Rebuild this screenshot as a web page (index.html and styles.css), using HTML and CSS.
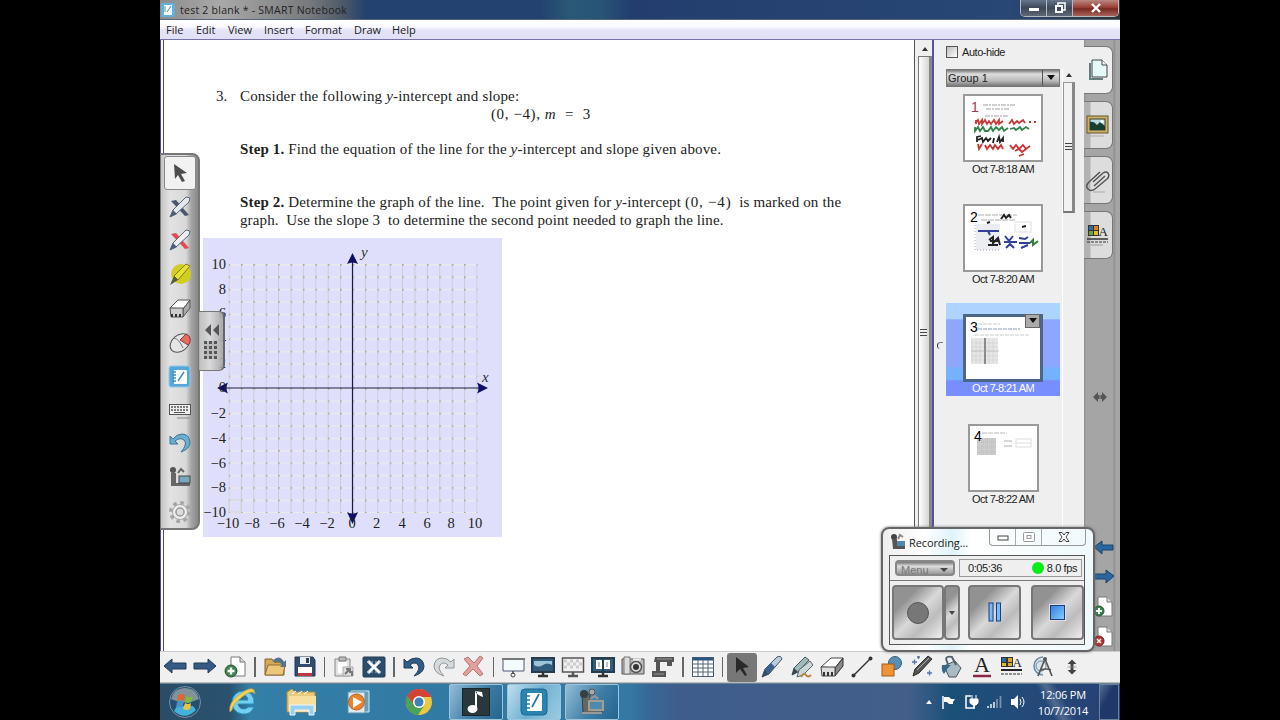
FILE: index.html
```html
<!DOCTYPE html>
<html lang="en">
<head>
    <meta charset="UTF-8">
    <meta name="viewport" content="width=device-width, initial-scale=1.0">
    <title>test 2 blank * - SMART Notebook</title>
    <link rel="stylesheet" href="styles.css">
</head>
<body>
    <div class="screen">
        <header class="titlebar">
            <svg class="app-icon" width="14" height="14" viewBox="0 0 14 14"><rect width="14" height="14" rx="1" fill="#63b1d8"/><rect x="3" y="2" width="8" height="10" fill="#fff"/><path d="M6 9l4-6M3 4h2M3 6h2M3 8h2" stroke="#4a8fb5"/></svg>
            <span class="title">test 2 blank * - SMART Notebook</span>
            <div class="window-buttons">
                <span class="wb min"><svg width="12" height="10"><rect x="1" y="5" width="10" height="3" fill="#fff"/></svg></span>
                <span class="wb max"><svg width="12" height="12"><path d="M4 3V1h7v7H9" fill="none" stroke="#fff" stroke-width="1.5"/><rect x="2" y="4" width="6" height="6" fill="none" stroke="#fff" stroke-width="2"/></svg></span>
                <span class="wb close"><svg width="12" height="10"><path d="M2 1l8 8M10 1L2 9" stroke="#fff" stroke-width="2.4"/></svg></span>
            </div>
        </header>

        <nav class="menubar">
            <span class="m-file">File</span>
            <span class="m-edit">Edit</span>
            <span class="m-view">View</span>
            <span class="m-insert">Insert</span>
            <span class="m-format">Format</span>
            <span class="m-draw">Draw</span>
            <span>Help</span>
        </nav>

        <main class="workspace">
            <section class="page">
                <div class="problem">
                    <span class="number">3.</span>
                    <div class="question">
                        <p class="l1">Consider the following <i>y</i>-intercept and slope:</p>
                        <p class="formula">(0, −4), <i>m</i> &nbsp;= &nbsp;3</p>
                        <p class="step step1"><b>Step 1.</b> Find the equation of the line for the <i>y</i>-intercept and slope given above.</p>
                        <p class="step2a"><b>Step 2.</b> Determine the graph of the line.&nbsp; The point given for <i>y</i>-intercept <span class="math">(0, −4)</span>&nbsp; is marked on the</p>
                        <p class="step2b">graph.&nbsp; Use the slope 3&nbsp; to determine the second point needed to graph the line.</p>
                    </div>
                </div>
                <svg class="graph" width="299" height="299" viewBox="203 238 299 299">
                    <defs>
                        <pattern id="grid" x="228.5" y="264" width="12.4" height="12.4" patternUnits="userSpaceOnUse">
                            <path d="M0 .5h12.4" stroke="#e9e9ee" stroke-width="2"/>
                            <path d="M.5 0v12.4" stroke="#cbcbd6"/>
                            <rect width="1.6" height="1.6" fill="#a5a396"/>
                        </pattern>
                    </defs>
                    <rect x="203" y="238" width="299" height="299" fill="#dfdffc"/>
                    <rect x="228.5" y="264" width="249" height="249" fill="url(#grid)"/>
                    <rect x="229" y="500" width="12" height="12" fill="none" stroke="#d4d4d2"/>
                    <g stroke="#1c1a4c" stroke-width="1.2"><path d="M352.5 256v264M220 388h264"/></g>
                    <g fill="#100f66">
                        <path d="M352.5 253l5.500 11q-5.500-3-11 0z"/>
                        <path d="M352.500 524l5.500-12q-5.500 3-11 0z"/>
                        <path d="M488 388l-11-5.500q3 5.500 0 11z"/>
                        <path d="M217 388l11-5.500q-3 5.500 0 11z"/>
                    </g>
                    <g class="axis y-axis">
                        <text x="226" y="269">10</text><text x="226" y="294">8</text><text x="226" y="318">6</text>
                        <text x="226" y="343">4</text><text x="226" y="368">2</text><text x="226" y="392">0</text>
                        <text x="226" y="418">−2</text><text x="226" y="443">−4</text><text x="226" y="468">−6</text>
                        <text x="226" y="492">−8</text><text x="226" y="517">−10</text>
                    </g>
                    <g class="axis x-axis">
                        <text x="228" y="528">−10</text><text x="252" y="528">−8</text><text x="277" y="528">−6</text>
                        <text x="302" y="528">−4</text><text x="327" y="528">−2</text><text x="352" y="528">0</text>
                        <text x="376.500" y="528">2</text><text x="402" y="528">4</text><text x="427" y="528">6</text>
                        <text x="451" y="528">8</text><text x="475" y="528">10</text>
                    </g>
                    <text class="var" x="361" y="257">y</text>
                    <text class="var" x="482" y="382">x</text>
                </svg>
            </section>

            <div class="page-scroll">
                <i class="up"></i>
                <div class="thumb"><b class="grip"></b></div>
            </div>

            <aside class="sorter">
                <label class="autohide"><i class="box"></i>Auto-hide</label>
                <div class="group"><span>Group 1</span><i class="drop"></i></div>
                <div class="slides">
                    <figure class="slide">
                        <svg width="78" height="66" viewBox="0 0 78 66">
                            <path d="M19 10h32M22 14h24M21 21h24" stroke="#888" stroke-dasharray="5 1 2 1" stroke-width=".8"/>
                            <g fill="none" stroke-width="1.800">
                                <path d="M12 25v4M11 28l3-3 1 4 3-4v4l3-4 2 4 2-3 2 3 3-4 2 4 3-4v4l4-3M45 29l3-4 2 4 3-3 2 2 4-3 2 3M65 27h2M70 27h2" stroke="#c83a3a"/>
                                <path d="M11 32v4l3-4 2 4 3-4 2 4h3l3-4 2 4 3-4 3 3 3-3 2 4 4-3M46 34l4-1 2 2 4-3 2 3 4-3 3 2" stroke="#32824a"/>
                                <path d="M17 41l-4 1v5M14 45l4-2 1 4 3-4 2 3 3-3M33 47l2-5 1 5 3-4v4M30 43l-1 5" stroke="#222"/>
                                <path d="M14 49l1 5 3-5M21 50l2 4 3-4 3 4 2-4 3 4 3-4 2 4M46 50l3 4 3-4 3 4 4-4 3 4 4-3M51 56l4-2 3 3 4-3M55 61l5-2" stroke="#c33"/>
                            </g>
                            <text x="7" y="17" fill="#a83550">1</text>
                        </svg>
                        <figcaption>Oct 7-8:18 AM</figcaption>
                    </figure>
                    <figure class="slide">
                        <svg width="78" height="66" viewBox="0 0 78 66">
                            <rect x="12" y="19" width="24" height="26" fill="#ececf3"/>
                            <path d="M14 10h39M17 15h34" stroke="#999" stroke-dasharray="6 1" stroke-width=".8"/>
                            <rect x="51" y="17" width="16" height="10" fill="none" stroke="#ddd"/>
                            <g fill="none" stroke-width="2">
                                <path d="M37 14l3-4 2 3 3-3 2 3M58 22l4-1M25 35l4-3v6l5-5 2 7M24 40h10M26 36h9M23 18l3-1" stroke="#222"/>
                                <path d="M14 26h21M24 26l2 4M41 31l4 5 4-5M40 37h13M42 43l4-4 4 4M55 33l6 1 3-2M55 38h11M57 43l7-3" stroke="#333f98"/>
                                <path d="M66 38l3-3v5l5-4" stroke="#2d813d"/>
                            </g>
                            <path d="M11 20v26M13 45h24" stroke="#aaa" stroke-dasharray="1 2"/>
                            <text x="6" y="17">2</text>
                        </svg>
                        <figcaption>Oct 7-8:20 AM</figcaption>
                    </figure>
                    <figure class="slide selected">
                        <svg width="78" height="66" viewBox="0 0 78 66">
                            <path d="M14 9h22M11 20h55" stroke="#ccc" stroke-dasharray="4 1"/>
                            <path d="M14 14h42" stroke="#6d86a7" stroke-dasharray="4 1" stroke-width=".8"/>
                            <rect x="7" y="23" width="27" height="26" fill="#e6e6e6"/>
                            <path d="M8 24v24M12 24v24M16 24v24M25 24v24M29 24v24M7 28h27M7 32h27M7 41h27M7 45h27" stroke="#d2d2d2" stroke-width=".6"/>
                            <path d="M21 23v26" stroke="#333"/><path d="M7 36h28" stroke="#999" stroke-width=".5"/>
                            <text x="6" y="17">3</text>
                        </svg>
                        <i class="slide-menu"></i>
                        <figcaption>Oct 7-8:21 AM</figcaption>
                    </figure>
                    <figure class="slide small">
                        <svg width="69" height="66" viewBox="0 0 69 66">
                            <path d="M13 8h25" stroke="#bbb" stroke-dasharray="5 1"/>
                            <rect x="8" y="13" width="19" height="17" fill="#ccc"/>
                            <path d="M8 17h19M8 22h19M8 27h19M13 13v17M18 13v17M23 13v17" stroke="#bbb" stroke-dasharray="1 1"/>
                            <path d="M35 16h8M35 21h8" stroke="#999" stroke-width=".8"/>
                            <rect x="47" y="14" width="15" height="8" fill="none" stroke="#ddd"/><path d="M47 18h15" stroke="#ddd"/>
                            <text x="5" y="16">4</text>
                        </svg>
                        <figcaption>Oct 7-8:22 AM</figcaption>
                    </figure>
                    <div class="slide-scroll"><i class="up"></i><div class="thumb"><b class="grip"></b></div></div>
                </div>
            </aside>

            <div class="tabs">
                <span class="tab active"><svg width="22" height="24" viewBox="0 0 22 24"><path d="M3 5v16h13" fill="none" stroke="#667d80" stroke-width="2"/><path d="M5 2h10l5 5v12H5z" fill="#e5f8fa" stroke="#444"/><path d="M15 2v5h5" fill="#fff" stroke="#444"/></svg></span>
                <span class="tab"><svg width="24" height="24" viewBox="0 0 24 24"><rect x="1" y="3" width="21" height="17" fill="#cbb26b" stroke="#67542b"/><rect x="4" y="6" width="15" height="11" fill="#b6dbe3" stroke="#493e28"/><path d="M4 9q4-1 7 3l3-3 5 4v4H4z" fill="#173f30"/><circle cx="16" cy="8.500" r="1.500" fill="#fff"/><path d="M4 23h14" stroke="#aaa"/></svg></span>
                <span class="tab"><svg width="24" height="25" viewBox="0 0 24 25"><path d="M7 14L17 5q3-2 5 0 2 3-1 6L9 21q-4 3-7 0t1-7L14 4M8 18l11-10" fill="none" stroke="#555" stroke-width="1.500"/><path d="M7 24h12" stroke="#aaa"/></svg></span>
                <span class="tab"><svg width="24" height="24" viewBox="0 0 24 24"><rect x="2" y="2" width="11" height="11" fill="#333"/><path d="M3 3h4v4H3z" fill="#2c6d9c"/><path d="M8 3h4v4H8z" fill="#e18125"/><path d="M3 8h4v4H3z" fill="#69a23b"/><path d="M8 8h4v4H8z" fill="#e0bb38"/><text x="12.500" y="13" class="ico-a">A</text><path d="M1 16h21" stroke="#333" stroke-width="1.500"/><path d="M1 19h21" stroke="#333" stroke-dasharray="3 1"/><path d="M5 22h12" stroke="#999"/></svg></span>
                <svg class="resize" width="14" height="12" viewBox="0 0 14 12"><path d="M0 6l5-5v3h4V1l5 5-5 5V8H5v3z" fill="#555"/><path d="M7 0v12" stroke="#999"/></svg>
                <div class="strip-tools">
                    <svg width="20" height="20" viewBox="0 0 20 20"><path d="M0 10l8-6v4h11v5H8v4z" fill="#2b679e" stroke="#1a446d"/></svg>
                    <svg width="20" height="20" viewBox="0 0 20 20"><path d="M20 10l-8-6v4H1v5h11v4z" fill="#2b679e" stroke="#1a446d"/></svg>
                    <svg width="20" height="24" viewBox="0 0 20 24"><path d="M4 2h9l5 5v14H4z" fill="#fff" stroke="#777"/><path d="M13 2v5h5" fill="#ddd" stroke="#777"/><circle cx="5" cy="16" r="5" fill="#39834a" stroke="#245c30"/><path d="M5 13v6M2 16h6" stroke="#fff" stroke-width="2"/></svg>
                    <svg width="20" height="24" viewBox="0 0 20 24"><path d="M4 2h9l5 5v14H4z" fill="#fff" stroke="#777"/><path d="M13 2v5h5" fill="#ddd" stroke="#777"/><circle cx="5" cy="16" r="5" fill="#b53230" stroke="#762020"/><path d="M3 14l4 4M7 14l-4 4" stroke="#fff" stroke-width="1.500"/></svg>
                </div>
            </div>

            <!-- floating tools over the page -->
            <div class="floating-tools">
                <span class="ft on"><svg width="24" height="24" viewBox="0 0 24 24"><path d="M6 3l13 9-6 1 4 7-3 1-4-7-3 4z" fill="#4d4d4d"/></svg></span>
                <span class="ft"><svg width="24" height="24" viewBox="0 0 24 24"><path d="M3 6l5-1 13 15-4 1z" fill="#49566b"/><path d="M2 22l3-7L18 2l4 1-1 4L8 19z" fill="#e5e9ed" stroke="#596575"/><path d="M2 22l3-7 4 4z" fill="#4d607b"/></svg></span>
                <span class="ft"><svg width="24" height="24" viewBox="0 0 24 24"><path d="M3 6l5-1 13 15-4 1z" fill="#df4c55"/><path d="M2 22l3-7L18 2l4 1-1 4L8 19z" fill="#edf0f2" stroke="#596575"/><path d="M2 22l3-7 4 4z" fill="#4d607b"/></svg></span>
                <span class="ft"><svg width="24" height="24" viewBox="0 0 24 24"><circle cx="13" cy="12" r="10" fill="#d2cd21"/><path d="M6 14L18 2l4 2L10 18z" fill="#e6e22d" stroke="#817c1b"/><path d="M2 23l4-9 4 4z" fill="#555a39"/></svg></span>
                <span class="ft"><svg width="24" height="24" viewBox="0 0 24 24"><path d="M2 12L10 4h12l-7 9z" fill="#fff" stroke="#555"/><path d="M15 13l7-9v8l-7 9z" fill="#aaa" stroke="#555"/><path d="M2 12h13v9H3z" fill="#ccc" stroke="#555"/><path d="M4 18v3M8 18v3M12 18v3" stroke="#333" stroke-width="2"/></svg></span>
                <span class="ft"><svg width="24" height="24" viewBox="0 0 24 24"><ellipse cx="12" cy="13" rx="11" ry="8" transform="rotate(-40 12 13)" fill="#e5e5e5" stroke="#555"/><path d="M12 10l6-6q5 2 4 8l-2 3z" fill="#e76c61" stroke="#8d3d37"/><path d="M6 8q5 1 9 10" fill="none" stroke="#777"/></svg></span>
                <span class="ft"><svg width="24" height="24" viewBox="0 0 24 24"><rect x="1" y="2" width="21" height="21" rx="2" fill="#58a7da" stroke="#8cccea"/><rect x="6" y="6" width="13" height="14" rx="1" fill="#fff"/><path d="M10 17l6-9M4 8h4M4 11h4M4 14h4M4 17h4" stroke="#438ebd" stroke-width="1.500"/></svg></span>
                <span class="ft"><svg width="24" height="24" viewBox="0 0 24 24"><rect x="1.500" y="7.500" width="21" height="10" fill="#eee" stroke="#555"/><path d="M3 10h18M3 13h18" stroke="#555" stroke-width="1.500" stroke-dasharray="2 1"/><path d="M6 15.500h11" stroke="#555"/><path d="M9 21h13" stroke="#888"/></svg></span>
                <span class="ft"><svg width="24" height="24" viewBox="0 0 24 24"><path d="M2 5v8h8l-3-3q5-4 9-1 4 4-3 12 9-3 9-10-1-8-8-8-5 0-9 5z" fill="#69afd2" stroke="#427391"/></svg></span>
                <span class="ft"><svg width="24" height="24" viewBox="0 0 24 24"><circle cx="5" cy="5" r="3" fill="#555"/><path d="M3 8h5v10h14v3H3z" fill="#666"/><rect x="11" y="11" width="11" height="7" fill="#78a8bd" stroke="#444"/><path d="M10 8l3-4 3 3" fill="none" stroke="#666" stroke-width="2"/></svg></span>
                <span class="ft"><svg width="24" height="24" viewBox="0 0 24 24"><circle cx="12" cy="13" r="9" fill="none" stroke="#a5a5a5" stroke-width="4" stroke-dasharray="3.500 3.570"/><circle cx="12" cy="13" r="7.500" fill="#eee" stroke="#aaa"/><circle cx="12" cy="13" r="4" fill="#ddd" stroke="#999" stroke-width="1.500"/></svg></span>
            </div>
            <div class="tool-handle">
                <svg width="16" height="12" viewBox="0 0 16 12"><path d="M7 0v12L1 6zM15 0v12L9 6z" fill="#555"/></svg>
                <div class="dots"></div>
            </div>
            <i class="page-mark"></i>
        </main>

        <div class="toolbar">
            <span class="tool"><svg width="24" height="24" viewBox="0 0 24 24"><path d="M1 11l8-7v4h14v6H9v4z" fill="#355a83" stroke="#203a59"/></svg></span>
            <span class="tool"><svg width="24" height="24" viewBox="0 0 24 24"><path d="M23 11l-8-7v4H1v6h14v4z" fill="#355a83" stroke="#203a59"/></svg></span>
            <span class="tool"><svg width="24" height="24" viewBox="0 0 24 24"><path d="M8 2h9l5 5v14H8z" fill="#fff" stroke="#777"/><path d="M17 2v5h5" fill="#ddd" stroke="#777"/><circle cx="8" cy="16" r="6" fill="#428250" stroke="#28552f"/><path d="M8 12.500v7M4.500 16h7" stroke="#fff" stroke-width="2.400"/></svg></span>
            <i class="sep"></i>
            <span class="tool"><svg width="24" height="24" viewBox="0 0 24 24"><path d="M2 4h7l2 3h10v13H2z" fill="#d5a855" stroke="#7c6030"/><path d="M2 20l3-10h17l-2 10z" fill="#edc779" stroke="#8f6d38"/><path d="M10 5q7-6 11 2l2-2v7h-6l2-2q-3-5-7-2z" fill="#56738e"/></svg></span>
            <span class="tool"><svg width="24" height="24" viewBox="0 0 24 24"><path d="M2 2h18l2 3v16H2z" fill="#324c70" stroke="#233754"/><path d="M7 2h10v7H7z" fill="#e6edf0"/><path d="M13 3h3v5h-3z" fill="#27415f"/><path d="M5 12h14v8H5z" fill="#fff"/><path d="M5 18h14v3H5z" fill="#ba3744"/></svg></span>
            <i class="sep"></i>
            <span class="tool"><svg width="24" height="24" viewBox="0 0 24 24"><path d="M3 4h15v17H3z" fill="#e2e2e2" stroke="#888"/><path d="M7 2h7v4H7z" fill="#bbb" stroke="#777"/><path d="M6 7h9v11H6z" fill="#fff"/><path d="M11 12h10v9H11z" fill="#ddd" stroke="#aaa"/><path d="M13 19l5-5M14 14h4v4M20 16v5" stroke="#777" stroke-width="2" fill="none"/></svg></span>
            <span class="tool"><svg width="24" height="24" viewBox="0 0 24 24"><rect x="1" y="2" width="22" height="20" rx="1" fill="#2b4d6c" stroke="#233d55"/><path d="M6 6l12 12M18 6L6 18" stroke="#fff" stroke-width="3"/><path d="M5 7h14M5 17h14" stroke="#a9c1d1" stroke-dasharray="2 2"/></svg></span>
            <i class="sep"></i>
            <span class="tool"><svg width="24" height="24" viewBox="0 0 24 24"><path d="M2 4v9h9l-3-3q5-4 8 0 3 4-4 11 10-3 10-10-1-8-8-8-5 0-9 4z" fill="#315c85" stroke="#203f5d"/></svg></span>
            <span class="tool"><svg width="24" height="24" viewBox="0 0 24 24"><path d="M22 4v9h-9l3-3q-5-4-8 0-3 4 4 11Q2 18 2 11q1-8 8-8 5 0 9 4z" fill="#d5d9db" stroke="#8d969b"/></svg></span>
            <span class="tool"><svg width="24" height="24" viewBox="0 0 24 24"><path d="M2 4l4-2 6 6 6-7 3 2-6 8 6 8-3 2-7-7-7 7-3-2 7-8z" fill="#e2a19d" stroke="#bb716e"/></svg></span>
            <i class="sep"></i>
            <span class="tool"><svg width="24" height="24" viewBox="0 0 24 24"><path d="M2 4h21v12H2z" fill="#f4fbfb" stroke="#557"/><path d="M1 4h23" stroke="#777" stroke-width="2"/><path d="M12 16v3" stroke="#444" stroke-width="1.500"/><circle cx="12" cy="20" r="2" fill="none" stroke="#444"/></svg></span>
            <span class="tool"><svg width="24" height="24" viewBox="0 0 24 24"><rect x="1" y="3" width="22" height="14" fill="#315c7e" stroke="#263d4d" stroke-width="2"/><path d="M3 6h18v4q-5-3-9 0t-9 0z" fill="#9ac5d8"/><path d="M12 17v4M7 21h10" stroke="#333" stroke-width="2.500"/></svg></span>
            <span class="tool"><svg width="24" height="24" viewBox="0 0 24 24"><rect x="1.500" y="3" width="21" height="14" fill="#f2f2f2" stroke="#555" stroke-width="1.500"/><path d="M3 6h18M3 12h18" stroke="#ccc" stroke-width="3" stroke-dasharray="3 3"/><path d="M6 9h16" stroke="#ccc" stroke-width="3" stroke-dasharray="3 3"/><path d="M12 17v4M7 21h10" stroke="#555" stroke-width="2.500"/></svg></span>
            <span class="tool"><svg width="24" height="24" viewBox="0 0 24 24"><rect x="1" y="3" width="22" height="14" fill="#315c7e" stroke="#263d4d" stroke-width="2"/><path d="M5 5h6v9H5zM13 5h6v9h-6z" fill="#fff"/><path d="M8 7v5M16 7v5" stroke="#789"/><path d="M12 3v14" stroke="#263d4d" stroke-width="2"/><path d="M12 17v4M7 21h10" stroke="#333" stroke-width="2.500"/></svg></span>
            <span class="tool"><svg width="24" height="24" viewBox="0 0 24 24"><path d="M1 4h22v15H1z" fill="#bbb" stroke="#555"/><path d="M3 2h6v17H3z" fill="#ddd" stroke="#777"/><circle cx="15" cy="12" r="5.500" fill="#ddd" stroke="#555" stroke-width="1.500"/><circle cx="15" cy="12" r="3" fill="#333"/><path d="M12 4.500h8" stroke="#eee" stroke-width="2"/></svg></span>
            <span class="tool"><svg width="24" height="24" viewBox="0 0 24 24"><path d="M4 2h19v5h-2v4h-5V7H9v9h6v6H1v-6h4V7H3z" fill="#555"/><path d="M6 4h15M3 19h10" stroke="#999"/></svg></span>
            <i class="sep"></i>
            <span class="tool"><svg width="24" height="24" viewBox="0 0 24 24"><rect x="1.500" y="2.500" width="21" height="19" fill="#fff" stroke="#4d6073"/><path d="M2 4h20" stroke="#2b557d" stroke-width="3"/><path d="M2 9h20M2 13h20M2 17h20M7 5v16M12 5v16M17 5v16" stroke="#526577"/></svg></span>
            <i class="sep"></i>
            <span class="tool pressed"><svg width="24" height="24" viewBox="0 0 24 24"><path d="M6 2l13 10-6 1 4 7-2 1-5-7-4 4z" fill="#292929"/></svg></span>
            <span class="tool"><svg width="24" height="24" viewBox="0 0 24 24"><path d="M2 22l3-8L17 2q4-2 5 2L9 19z" fill="#b8cddd" stroke="#40536b"/><path d="M5 14l6-6 4 4-6 7z" fill="#3c608d"/><path d="M2 22l3-8 4 5z" fill="#354b68"/></svg></span>
            <span class="tool"><svg width="24" height="24" viewBox="0 0 24 24"><path d="M2 20l2-7L15 2l4 3L8 17z" fill="#9ebab9" stroke="#435158"/><path d="M7 22l2-7L20 6l3 4-10 10z" fill="#cad8d9" stroke="#56646a"/><path d="M2 20l2-7 4 4z" fill="#38464e"/><path d="M11 22q3-5 5-2t5 0" fill="none" stroke="#b88240" stroke-width="2"/></svg></span>
            <span class="tool"><svg width="24" height="24" viewBox="0 0 24 24"><path d="M1 12L11 3h12l-8 10z" fill="#fff" stroke="#444"/><path d="M15 13l8-10v8l-8 10z" fill="#888" stroke="#333"/><path d="M1 12h14v9H2z" fill="#ddd" stroke="#444"/><path d="M4 17v4M8 17v4M12 17v4" stroke="#333" stroke-width="2"/></svg></span>
            <span class="tool"><svg width="24" height="24" viewBox="0 0 24 24"><path d="M3 21L21 3" stroke="#333" stroke-width="1.500"/><circle cx="3.500" cy="20.500" r="2" fill="#333"/><circle cx="20.500" cy="3.500" r="2" fill="#333"/></svg></span>
            <span class="tool"><svg width="24" height="24" viewBox="0 0 24 24"><circle cx="15" cy="8" r="6.500" fill="#568eb5" stroke="#34617e"/><rect x="2" y="9" width="12" height="12" fill="#ee9337" stroke="#9e5c1b"/></svg></span>
            <span class="tool"><svg width="24" height="24" viewBox="0 0 24 24"><path d="M3 21l2-7L18 1l4 3L9 18z" fill="#555" stroke="#292929"/><path d="M7 15L19 3" stroke="#aaa"/><path d="M2 7h5M4.500 4.500v5M7 2h3M8.500 1v3M17 18h5M19.500 15.500v5" stroke="#5573aa" stroke-width="1.300"/></svg></span>
            <span class="tool"><svg width="24" height="24" viewBox="0 0 24 24"><path d="M4 11l11-5 6 7-5 9H9z" fill="#a9bcc3" stroke="#45535b"/><path d="M8 9Q3 0 12 2l4 8" fill="none" stroke="#53616a" stroke-width="2"/><path d="M2 10h9l-3 3-4 6q-3-3-2-9" fill="#38668b"/></svg></span>
            <span class="tool"><svg width="24" height="24" viewBox="0 0 24 24"><text x="4" y="17" class="big-a">A</text><path d="M3 21h18" stroke="#8e2444" stroke-width="2.500"/></svg></span>
            <span class="tool"><svg width="24" height="24" viewBox="0 0 24 24"><rect x="1" y="2" width="12" height="10" fill="#333"/><path d="M2 3h4v4H2z" fill="#2c6d9c"/><path d="M8 3h4v4H8z" fill="#e0a125"/><path d="M2 8h4v3H2z" fill="#e0bb38"/><path d="M8 8h4v3H8z" fill="#ddad30"/><text x="12.500" y="12" class="ico-a">A</text><path d="M1 15h21" stroke="#222" stroke-width="2"/><path d="M1 19h21" stroke="#333" stroke-dasharray="3 1"/></svg></span>
            <span class="tool"><svg width="24" height="24" viewBox="0 0 24 24"><path d="M13 2A9 9 0 1 0 13 20" fill="#d8e5ec" stroke="#6c8fa7" stroke-width="1.500"/><circle cx="11" cy="11" r="5" fill="none" stroke="#6c8fa7"/><path d="M15 4L8 21M15 4l7 17M11 15q5-2 10 0" fill="none" stroke="#555" stroke-width="1.700"/><circle cx="15" cy="4" r="2" fill="#555"/></svg></span>
            <span class="tool"><svg width="18" height="18" viewBox="0 0 24 24"><path d="M12 2l6 6h-4v8h4l-6 6-6-6h4V8H6z" fill="#444"/><path d="M6 12h12" stroke="#888"/></svg></span>
        </div>

        <footer class="taskbar">
            <div class="launchers">
                <span class="launch orb"><svg width="34" height="34" viewBox="0 0 34 34"><circle cx="17" cy="17" r="15.500" fill="#254f70" stroke="#75909e"/><path d="M3 14Q6 3 17 3t14 11q-14 7-28 0" fill="#81929c"/><path d="M6 26q11 10 22-1l-3-4H9z" fill="#43b1dc"/><path d="M10 10q3-2 7 0l-1 6q-4-2-7 0z" fill="#dd6731"/><path d="M18 11q3 2 7 0l-2 6q-3 2-6 0z" fill="#7cba48"/><path d="M9 17q3-2 7 0l-2 6q-3-2-6 0z" fill="#4495c4"/><path d="M17 18q3 2 6 0l-1 6q-3 2-7 0z" fill="#ecc243"/></svg></span>
                <span class="launch ie"><svg width="30" height="30" viewBox="0 0 30 30"><path d="M26 20q-3 8-12 7Q4 25 4 15 5 5 15 4q12 1 11 13H10q1 5 6 5 3 0 4-2zM10 13h10q-1-5-5-5t-5 5" fill="#75cff3" fill-rule="evenodd" stroke="#278db8"/><path d="M2 25Q0 16 11 8 22-1 26 3l1 4q-3-5-13 3T4 23z" fill="#f4d251" stroke="#c0a03a" stroke-width=".7"/></svg></span>
                <span class="launch folder"><svg width="32" height="30" viewBox="0 0 32 30"><path d="M1 5l5-3 3 3h20v20H1z" fill="#e8ca7d" stroke="#a98c48"/><path d="M3 9h27v16H3z" fill="#f7dfa0"/><path d="M6 7l4-3M12 7l4-3M18 7l4-3" stroke="#fff"/><path d="M4 28V18h24v10h-5v-5H9v5z" fill="#9ad0ee" stroke="#e9f7fe"/></svg></span>
                <span class="launch media"><svg width="28" height="28" viewBox="0 0 28 28"><path d="M7 3h18v21H7z" fill="#61a1c0" stroke="#d4edf5"/><path d="M4 4h17v21H4z" fill="#dceaf0" stroke="#5e92a9"/><circle cx="12.500" cy="14" r="8" fill="#ed812c" stroke="#bb6526"/><path d="M9 9l9 5-9 6z" fill="#fff"/></svg></span>
                <span class="launch chrome"><svg width="28" height="28" viewBox="0 0 28 28"><circle cx="14" cy="14" r="13" fill="#eac83f"/><path d="M2 8Q7 0 14 1q9 0 12 8H14q-5 0-6 7z" fill="#d64136"/><path d="M2 8Q-1 14 3 21q4 6 10 6l6-9q-5 3-9 0z" fill="#4aa252"/><circle cx="14" cy="14" r="6" fill="#fff"/><circle cx="14" cy="14" r="4.500" fill="#3d82b8"/></svg></span>
            </div>
            <div class="task"><svg width="28" height="28" viewBox="0 0 28 28"><rect x=".5" y=".5" width="27" height="27" fill="#2a373b" stroke="#16262c"/><path d="M13 3q2 4 8 6l-1-5zM13 4h2v17h-2z" fill="#fff"/><ellipse cx="10.500" cy="21" rx="5" ry="4" fill="#fff"/></svg></div>
            <div class="task current"><svg width="28" height="28" viewBox="0 0 28 28"><rect x="1" y="1" width="26" height="26" rx="4" fill="#2b83af" stroke="#1b6791"/><rect x="7" y="5" width="15" height="18" rx="1" fill="#fff"/><path d="M12 19l7-13M5 8h5M5 12h5M5 16h5M5 20h5" stroke="#2878a1" stroke-width="1.700"/></svg></div>
            <div class="task"><svg width="28" height="28" viewBox="0 0 28 28"><path d="M4 6h8v13h12v6H5z" fill="#616765" stroke="#393f40"/><circle cx="6" cy="6" r="4" fill="#393f40"/><circle cx="14" cy="4" r="3" fill="#aaa" stroke="#555"/><rect x="11" y="13" width="14" height="9" fill="#4e89ae" stroke="#a29e91" stroke-width="2"/><path d="M12 11l5-3 3 3M4 25h20" stroke="#999" stroke-width="2" fill="none"/></svg></div>
            <div class="tray">
                <svg width="10" height="8" viewBox="0 0 10 8"><path d="M2 6l3-4 3 4z" fill="#fff"/></svg>
                <svg width="16" height="16" viewBox="0 0 16 16"><path d="M2 2v13" stroke="#fff" stroke-width="1.500"/><path d="M3 3h5l2 2h4l-2 3v2H8L6 8H3z" fill="#fff"/></svg>
                <svg width="16" height="16" viewBox="0 0 16 16"><path d="M7 2H2v12h8v-3" fill="none" stroke="#fff" stroke-width="1.500"/><path d="M6 5h8v4l-2 2H9L6 9zM8 1v4M12 1v4M10 11v4" fill="#fff" stroke="#fff"/></svg>
                <svg width="16" height="16" viewBox="0 0 16 16"><path d="M1 14v-2M4 14v-4M7 14V8" stroke="#ddd" stroke-width="1.700"/><path d="M10 14V5M13.500 14V2" stroke="#7896a9" stroke-width="1.700"/></svg>
                <svg width="16" height="16" viewBox="0 0 16 16"><path d="M1 5h3l4-4v14l-4-4H1z" fill="#fff"/><path d="M10 5q2 3 0 6M12 3q4 5 0 10" fill="none" stroke="#fff"/></svg>
            </div>
            <div class="clock"><span>12:06 PM</span><span>10/7/2014</span></div>
            <i class="show-desktop"></i>
        </footer>

        <!-- recorder window -->
        <section class="recorder">
            <div class="rec-title">
                <svg width="16" height="18" viewBox="0 0 16 18"><circle cx="4" cy="4" r="3" fill="#444"/><path d="M2 6h5v6h8v4H3z" fill="#555"/><rect x="7" y="8" width="8" height="5" fill="#4f88ad"/><path d="M8 6l2-4 3 2" stroke="#888" stroke-width="2" fill="none"/></svg>
                <span>Recording...</span>
                <div class="rec-buttons">
                    <i><svg width="12" height="8"><rect x="1" y="3" width="10" height="4" fill="#fff" stroke="#444"/></svg></i>
                    <i><svg width="12" height="10"><rect x=".5" y=".5" width="11" height="9" rx="1" fill="#fff" stroke="#999"/><rect x="4" y="3.500" width="4" height="3" fill="none" stroke="#999"/></svg></i>
                    <i class="x"><svg width="12" height="10"><path d="M1 .5h3l2 2.500 2-2.500h3L8 5l3 4.500H8L6 7 4 9.500H1L4 5z" fill="#fff" stroke="#444"/></svg></i>
                </div>
            </div>
            <div class="rec-body">
                <div class="rec-status">
                    <span class="rec-menu"><span>Menu</span><i></i></span>
                    <span class="rec-time"><span>0:05:36</span><b></b><span>8.0 fps</span></span>
                </div>
                <div class="rec-controls">
                    <span class="rb record"><i></i></span>
                    <span class="rb more"><i></i></span>
                    <span class="rb pause"><svg width="14" height="21"><rect x="1" y="1" width="4" height="18" fill="#7cb9f4" stroke="#173f83"/><rect x="8.500" y="1" width="4" height="18" fill="#7cb9f4" stroke="#173f83"/></svg></span>
                    <span class="rb stop"><i></i></span>
                </div>
            </div>
        </section>
    </div>
</body>
</html>
```
FILE: styles.css
```css
* {
    box-sizing: border-box;
}

body {
    margin: 0;
    background: #000;
    overflow: hidden;
    font-family: "Open Sans", "Noto Sans", sans-serif;
    color: #222;
}

p, figure {
    margin: 0;
}

svg {
    display: block;
    flex: none;
}

.screen {
    position: relative;
    width: 960px;
    height: 720px;
    margin: 0 auto;
    display: flex;
    flex-direction: column;
    overflow: hidden;
}

/* title bar */
.titlebar {
    height: 20px;
    flex: none;
    display: flex;
    align-items: center;
    padding-left: 1px;
    background: linear-gradient(90deg, #8d8c8d 0, #aaa9a9 60px, #77797c 150px, #4a5768 185px, #24426f 205px, #244270 380px, #2a5876 410px, #285577 440px, #233e6e 470px, #284774 850px, #333 960px);
    border-bottom: 1px solid #53667c;
}

.title {
    font-size: 10.5px;
    letter-spacing: .25px;
    margin-left: 5px;
    color: #1f1f1f;
    white-space: nowrap;
}

.window-buttons {
    display: flex;
    align-self: flex-start;
    height: 17px;
    margin-left: auto;
    margin-right: 1px;
    border: 1px solid #b2bac2;
    border-top: 0;
    border-radius: 0 0 5px 5px;
    overflow: hidden;
}

.wb {
    display: flex;
    align-items: center;
    justify-content: center;
    width: 26px;
    background: linear-gradient(#66758b, #3b4656 50%, #5f6875);
    border-right: 1px solid #b2bac2;
}

.wb.close {
    width: 45px;
    border: 0;
    background: linear-gradient(#b98881, #9c4038 45%, #762920 55%, #a8635a);
}

/* menu */
.menubar {
    height: 20px;
    flex: none;
    display: flex;
    align-items: center;
    padding-left: 6px;
    font-size: 11px;
    background: linear-gradient(#fff 0, #fafaff 35%, #e4e3f8 55%, #e0dff6);
    border-bottom: 1px solid #7773a8;
}

.m-file { width: 30px; }
.m-edit { width: 32px; }
.m-view { width: 36px; }
.m-insert { width: 41px; }
.m-format { width: 49px; }
.m-draw { width: 38px; }

.workspace {
    position: relative;
    display: flex;
    height: 611px;
    flex: none;
}

/* page */
.page {
    width: 754px;
    background: #fff;
    border-left: 4px double #4d478c;
    padding: 48px 0 0 39px;
    overflow: hidden;
}

.problem {
    display: flex;
    padding-left: 13px;
    font-family: "Liberation Serif", serif;
    font-size: 15px;
    line-height: 17.7px;
    white-space: nowrap;
    color: #222;
}

.number {
    width: 24px;
}

.l1 {
    letter-spacing: .18px;
}

.formula {
    padding-left: 251px;
    letter-spacing: .6px;
}

.math {
    letter-spacing: .8px;
}

.step {
    margin: 17.7px 0 35.4px;
}

.step1 {
    letter-spacing: .15px;
}

.step2a {
    letter-spacing: .15px;
}

.step2b {
    letter-spacing: .12px;
}

.graph {
    margin-top: 8px;
}

.axis {
    font: 14.5px "Liberation Serif", serif;
    fill: #222;
}

.y-axis {
    text-anchor: end;
}

.x-axis {
    text-anchor: middle;
}

.var {
    font: italic 15px "Liberation Serif", serif;
    fill: #333;
}

/* scrollbars */
.page-scroll {
    width: 20px;
    flex: none;
    border-left: 1px solid #555;
    border-right: 2px solid #5550a9;
    background: #efefef;
    display: flex;
    flex-direction: column;
    align-items: center;
}

.up {
    width: 0;
    height: 0;
    flex: none;
    border: 3px solid transparent;
    border-top: 0;
    border-bottom: 4px solid #333;
}

.page-scroll .up {
    margin: 7px 0 5px 2px;
}

.page-scroll .thumb {
    flex: 1;
    width: 14px;
    margin-left: 3px;
    border: 1px solid #777;
    border-right: 3px solid #888;
    background: linear-gradient(90deg, #fff, #d5d5d5);
}

.grip {
    display: block;
    width: 7px;
    height: 8px;
    background: repeating-linear-gradient(#444 0 1px, #eee 1px 3px);
}

.page-scroll .grip {
    margin: 272px 0 0 1px;
}

/* page sorter */
.sorter {
    width: 150px;
    flex: none;
    padding: 5px 0 0 12px;
    background: #efefef;
    font-family: "Liberation Sans", sans-serif;
    font-size: 11px;
}

.autohide {
    display: flex;
    align-items: center;
    height: 13px;
    gap: 4px;
    letter-spacing: -.45px;
}

.box {
    width: 12px;
    height: 12px;
    background: linear-gradient(135deg, #bbb, #fff);
    border: 1px solid #555;
}

.group {
    width: 114px;
    height: 18px;
    margin-top: 11px;
    display: flex;
    justify-content: space-between;
    border: 1px solid #777;
    background: linear-gradient(#777, #ddd 25%, #bdbdbd 65%, #777);
    line-height: 17px;
    padding-left: 1px;
}

.drop {
    width: 17px;
    border-left: 1px solid #555;
}

.drop::before, .slide-menu::before {
    content: "";
    display: block;
    margin: 5px auto;
    width: 0;
    border: 4px solid transparent;
    border-top: 5px solid #111;
    border-bottom: 0;
}

.slides {
    display: grid;
    grid-template-columns: 114px 15px;
    grid-auto-rows: 110px;
    margin-top: -4px;
}

.slide {
    grid-column: 1;
    position: relative;
    height: 93px;
    display: flex;
    flex-direction: column;
    align-items: center;
    padding-top: 12px;
    letter-spacing: -.65px;
}

.slide > svg {
    background: #fff;
    outline: 2px solid #999;
    outline-offset: -1px;
}

.slide text {
    font: 14px "Liberation Sans", sans-serif;
}

.slide figcaption {
    line-height: 14px;
    margin-top: 1px;
    white-space: nowrap;
}

.slide.selected {
    color: #fff;
    background: linear-gradient(#add4ff 0 17%, #8da7ff 18% 68%, #74b1ff 70% 82%, #778eff 84%);
}

.slide.selected > svg {
    outline: 3px solid #4c6685;
    outline-offset: -2px;
}

.slide.selected figcaption {
    margin-top: 0;
}

.slide-menu {
    position: absolute;
    right: 20px;
    top: 11px;
    width: 15px;
    height: 14px;
    background: #aaa;
    border: 1px solid #666;
}

.slide-menu::before {
    margin: 3px auto;
}

.slide-scroll {
    grid-column: 2;
    grid-row: 1 / 5;
    height: 571px;
    margin-top: -14px;
    margin-left: 2px;
    border-left: 1px solid #fff;
    display: flex;
    flex-direction: column;
}

.slide-scroll .up {
    margin: 4px 0 5px 3px;
}

.slide-scroll .thumb {
    width: 12px;
    height: 131px;
    background: #f2f2f2;
    border: 1px solid #999;
    border-right: 3px solid #888;
    border-bottom: 2px solid #777;
}

.slide-scroll .grip {
    margin: 60px 0 0 1px;
}

/* side tabs */
.tabs {
    width: 36px;
    flex: none;
    display: flex;
    flex-direction: column;
    gap: 7px;
    padding-top: 6px;
    background: linear-gradient(90deg, #8d8d8d, #a5a5a5 2px 29px, #8d8d8d 30px, #a5a5a5 32px);
}

.tab {
    width: 29px;
    height: 48px;
    flex: none;
    display: flex;
    align-items: center;
    justify-content: center;
    border: 1px solid #777;
    border-left: 0;
    border-radius: 0 7px 7px 0;
    background: linear-gradient(90deg, #b3b3b3 0 6px, #ddd 7px);
}

.tab.active {
    background: #efefef;
}

.ico-a {
    font: 13px "Liberation Serif", serif;
    fill: #222;
}

.resize {
    margin: 125px 0 0 9px;
}

.strip-tools {
    margin: 127px 0 0 10px;
    display: grid;
    gap: 9px;
}

.strip-tools svg:nth-child(n+3) {
    margin-bottom: -3px;
}

/* floating toolbar sits over the page */
.floating-tools {
    position: absolute;
    left: 0;
    top: 113px;
    width: 40px;
    height: 377px;
    padding: 1px 5px 0 3px;
    border: 2px solid #777;
    border-left: 1px solid #777;
    border-radius: 0 8px 8px 0;
    background: linear-gradient(90deg, #c5c5c5, #e2e2e2 9px, #d8d8d8 25px, #a6a6a6 30px, #888);
}

.ft {
    display: flex;
    align-items: center;
    justify-content: center;
    width: 32px;
    height: 33.8px;
}

.ft.on {
    border: 1px solid #888;
    border-radius: 3px;
    background: #f2f2f2;
}

.tool-handle {
    position: absolute;
    left: 39px;
    top: 271px;
    width: 26px;
    height: 60px;
    padding: 12px 0 0 5px;
    border: 1px solid #777;
    border-left: 0;
    border-right: 2px solid #666;
    border-radius: 0 6px 6px 0;
    background: linear-gradient(90deg, #b9b9b9e8, #d8d8d8e8 45%, #a5a5a5e8);
}

.dots {
    width: 13px;
    height: 18px;
    margin-top: 5px;
    background: repeating-linear-gradient(90deg, transparent 0 3px, #bbb 3px 5px), repeating-linear-gradient(#555 0 3px, #bbb 3px 5px);
}

.page-mark {
    position: absolute;
    left: 777px;
    top: 302px;
    width: 6px;
    height: 7px;
    border-left: 1px solid #333;
    border-top: 1px solid #777;
    border-radius: 5px 0 0 5px;
}

/* bottom toolbar */
.toolbar {
    height: 32px;
    flex: none;
    display: flex;
    align-items: center;
    background: #f0f0f0;
    border-top: 1px solid #ccc;
    border-bottom: 1px solid #bbb;
}

.tool {
    width: 30px;
    height: 29px;
    flex: none;
    display: flex;
    align-items: center;
    justify-content: center;
}

.pressed {
    background: #777;
    border-radius: 3px;
}

.sep {
    width: 1.5px;
    height: 20px;
    flex: none;
    margin: 0 4px;
    background: #666;
}

.big-a {
    font: 22px "Liberation Serif", serif;
    fill: #222;
}

/* taskbar */
.taskbar {
    flex: 1;
    display: flex;
    position: relative;
    background:
        linear-gradient(62deg, transparent 0 790px, #8295aa77 798px, transparent 808px),
        linear-gradient(90deg, #2a4c66 0, #2a526f 70px, #337fa7 90px, #317aa4 280px, #3478a3 470px, #376797 490px, #3f5d8c 520px, #425e89 750px, #1a5079 790px, #244a79 870px, #273f74 960px);
    border-top: 1px solid #688397;
}

.launchers {
    display: flex;
    align-items: center;
    width: 289px;
    flex: none;
}

.launch {
    display: flex;
    justify-content: center;
    flex: none;
}

.orb { width: 50px; }
.ie { width: 66px; }
.folder { width: 52px; }
.media { width: 60px; }
.chrome { width: 61px; }

.task {
    width: 54px;
    margin-right: 4px;
    border: 1px solid #9ac6dc;
    border-radius: 2px;
    display: flex;
    align-items: center;
    justify-content: center;
    background: linear-gradient(120deg, #93bdd6, #3d7da6 55%, #24658f);
}

.task.current {
    background: linear-gradient(120deg, #c1dfed, #70b0d2 50%, #9cccdf);
}

.tray {
    display: flex;
    align-items: center;
    gap: 7px;
    margin-left: auto;
}

.clock {
    width: 74px;
    margin-right: -1px;
    display: flex;
    flex-direction: column;
    align-items: center;
    justify-content: center;
    color: #fff;
    font-size: 11px;
    line-height: 16px;
    letter-spacing: -.2px;
    padding-top: 1px;
}

.show-desktop {
    width: 20px;
    margin-right: 1px;
    border: 1px solid #6b829b;
    background: linear-gradient(120deg, #526f91, #203769 40%);
}

/* recorder floats over everything */
.recorder {
    position: absolute;
    left: 721px;
    top: 527px;
    width: 214px;
    height: 125px;
    padding: 0 7px 7px;
    border: 2px solid #666;
    border-radius: 8px;
    background: linear-gradient(90deg, #eee, #fff 20%, #dff3fa 33%, #fff 42%, #eff9fc);
    box-shadow: 0 0 3px #777;
}

.rec-title {
    height: 26px;
    display: flex;
    align-items: center;
    font-size: 11px;
    letter-spacing: -.1px;
    gap: 3px;
}

.rec-buttons {
    display: flex;
    align-self: flex-start;
    height: 17px;
    margin-left: auto;
    border: 1px solid #999;
    border-top: 0;
    border-radius: 0 0 4px 4px;
}

.rec-buttons i {
    width: 26px;
    display: flex;
    align-items: center;
    justify-content: center;
    border-right: 1px solid #aaa;
}

.rec-buttons .x {
    width: 43px;
    border: 0;
}

.rec-body {
    height: 90px;
    margin: 0 1px 0 -1px;
    background: #efefef;
    border: 1px solid #555;
}

.rec-status {
    height: 25px;
    display: flex;
    align-items: center;
    padding: 0 2px 0 5px;
    gap: 4px;
    border-bottom: 1px solid #777;
    font: 11px "Liberation Sans", sans-serif;
}

.rec-menu {
    width: 60px;
    height: 16px;
    display: flex;
    justify-content: space-between;
    align-items: center;
    padding: 3px 5px 0 4px;
    overflow: hidden;
    border: 2px solid #888;
    border-radius: 4px;
    background: linear-gradient(#777, #ddd 35%, #999);
    color: #777;
}

.rec-menu i, .more i {
    width: 0;
    border: 4px solid transparent;
    border-top: 4px solid #444;
    border-bottom: 0;
}

.rec-time {
    flex: 1;
    height: 18px;
    padding: 0 4px 0 8px;
    display: flex;
    align-items: center;
    border: 1px solid #999;
    letter-spacing: -.4px;
}

.rec-time b {
    width: 12px;
    height: 12px;
    margin-left: auto;
    margin-right: 3px;
    border-radius: 50%;
    background: #08ed15;
}

.rec-controls {
    display: flex;
    padding: 4px 0 0 2px;
}

.rb {
    height: 55px;
    display: flex;
    align-items: center;
    justify-content: center;
    border: 2px solid #777;
    border-radius: 4px;
    background: linear-gradient(135deg, #929292 0 25%, #d9d9d9 50%, #bcbcbc 70%, #eee);
}

.record {
    width: 52px;
}

.record i {
    width: 22px;
    height: 22px;
    border-radius: 50%;
    background: #777;
    border: 1px solid #555;
}

.more {
    width: 16px;
}

.more i {
    border-width: 4px 3px 0;
}

.pause {
    width: 53px;
    margin-left: 8px;
}

.stop {
    width: 53px;
    margin-left: 10px;
}

.stop i {
    width: 15px;
    height: 15px;
    border: 1px solid #173f83;
    background: linear-gradient(135deg, #3380df, #8dcbfb);
    outline: 1px solid #ddd;
}
```
